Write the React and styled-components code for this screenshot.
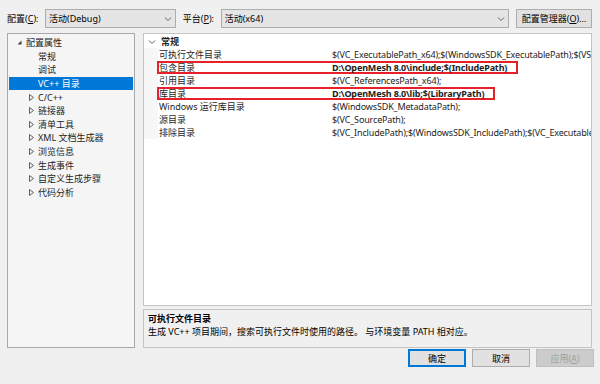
import React from 'react';
import styled, { createGlobalStyle } from 'styled-components';

const GlobalStyle = createGlobalStyle`
  html, body {
    margin: 0;
    padding: 0;
    background: #f0f0f0;
  }
  body {
    width: 600px;
    height: 384px;
    overflow: hidden;
    font-family: "Noto Sans", "Noto Sans CJK SC", sans-serif;
    font-size: 9px;
    color: #000;
  }
`;

const tree = [
  { label: '配置属性', level: 0, open: true },
  { label: '常规', level: 1 },
  { label: '调试', level: 1 },
  { label: 'VC++ 目录', level: 1, selected: true },
  { label: 'C/C++', level: 1, closed: true },
  { label: '链接器', level: 1, closed: true },
  { label: '清单工具', level: 1, closed: true },
  { label: 'XML 文档生成器', level: 1, closed: true },
  { label: '浏览信息', level: 1, closed: true },
  { label: '生成事件', level: 1, closed: true },
  { label: '自定义生成步骤', level: 1, closed: true },
  { label: '代码分析', level: 1, closed: true },
];

const props = [
  { name: '可执行文件目录', value: '$(VC_ExecutablePath_x64);$(WindowsSDK_ExecutablePath);$(VS_ExecutablePath);$(MSBuild_ExecutablePath)' },
  { name: '包含目录', value: 'D:\\OpenMesh 8.0\\include;$(IncludePath)', bold: true },
  { name: '引用目录', value: '$(VC_ReferencesPath_x64);' },
  { name: '库目录', value: 'D:\\OpenMesh 8.0\\lib;$(LibraryPath)', bold: true },
  { name: 'Windows 运行库目录', value: '$(WindowsSDK_MetadataPath);' },
  { name: '源目录', value: '$(VC_SourcePath);' },
  { name: '排除目录', value: '$(VC_IncludePath);$(WindowsSDK_IncludePath);$(VC_ExecutablePath_x64);' },
];

function Chevron() {
  return (
    <svg width="8" height="6" viewBox="0 0 8 6">
      <path d="M1 1.5 L4 4.5 L7 1.5" fill="none" stroke="#606060" strokeWidth="1" />
    </svg>
  );
}

function OpenArrow() {
  return (
    <svg width="5" height="5" viewBox="0 0 5 5">
      <path d="M4.5 0.5 L4.5 4.5 L0.5 4.5 Z" fill="#404040" />
    </svg>
  );
}

function ClosedArrow() {
  return (
    <svg width="5" height="7" viewBox="0 0 5 7">
      <path d="M0.5 0.5 L4.5 3.5 L0.5 6.5 Z" fill="none" stroke="#606060" strokeWidth="1" />
    </svg>
  );
}

function App() {
  return (
    <>
      <GlobalStyle />
      <Dialog>
        <TopBar>
          <Label>配置(<u>C</u>):</Label>
          <Select width={131}>
            <span>活动(Debug)</span>
            <Chevron />
          </Select>
          <Label left={7}>平台(<u>P</u>):</Label>
          <Select width={289}>
            <span>活动(x64)</span>
            <Chevron />
          </Select>
          <ManagerButton>配置管理器(<u>O</u>)...</ManagerButton>
        </TopBar>

        <Main>
          <TreePanel>
            {tree.map((item) => (
              <TreeItem key={item.label} level={item.level} selected={item.selected}>
                <Toggle>
                  {item.open && <OpenArrow />}
                  {item.closed && <ClosedArrow />}
                </Toggle>
                {item.label}
              </TreeItem>
            ))}
          </TreePanel>

          <RightSide>
            <Grid>
              <Category>
                <CatToggle>
                  <Chevron />
                </CatToggle>
                常规
              </Category>
              {props.map((p) => (
                <PropRow key={p.name}>
                  <Gutter />
                  <Mark marked={p.bold}>
                    <PropName>{p.name}</PropName>
                    <PropValue bold={p.bold}>{p.value}</PropValue>
                  </Mark>
                </PropRow>
              ))}
            </Grid>
            <Description>
              <DescTitle>可执行文件目录</DescTitle>
              <DescText>生成 VC++ 项目期间，搜索可执行文件时使用的路径。 与环境变量 PATH 相对应。</DescText>
            </Description>
          </RightSide>
        </Main>

        <Footer>
          <Button primary>确定</Button>
          <Button>取消</Button>
          <Button disabled>应用(<u>A</u>)</Button>
        </Footer>
      </Dialog>
    </>
  );
}

export default App;

const Dialog = styled.div`
  display: flex;
  flex-direction: column;
  width: 600px;
  height: 384px;
  box-sizing: border-box;
  padding: 9px 8px 0 7px;
`;

const TopBar = styled.div`
  display: flex;
  align-items: center;
  height: 19px;
`;

const Label = styled.span`
  width: 38px;
  margin-left: ${(p) => p.left || 0}px;
  white-space: nowrap;
  color: #000;
  u { text-decoration: underline; }
`;

const Select = styled.div`
  box-sizing: border-box;
  width: ${(p) => p.width}px;
  height: 19px;
  display: flex;
  align-items: center;
  justify-content: space-between;
  padding: 0 3px;
  background: #e5e5e5;
  border: 1px solid #adadad;
  svg { margin-top: 1px; }
`;

const Button = styled.button`
  box-sizing: border-box;
  width: 58px;
  height: 18px;
  padding: 0;
  font: inherit;
  color: ${(p) => (p.disabled ? '#a0a0a0' : '#000')};
  background: ${(p) => (p.disabled ? '#cccccc' : '#e1e1e1')};
  border: 1px solid ${(p) => (p.primary ? '#0078d7' : p.disabled ? '#bfbfbf' : '#adadad')};
  box-shadow: ${(p) => (p.primary ? 'inset 0 0 0 1px #0078d7' : 'none')};
  white-space: nowrap;
`;

const ManagerButton = styled(Button)`
  width: 76px;
  height: 19px;
  margin-left: 7px;
`;

const Main = styled.div`
  display: flex;
  gap: 8px;
  margin-top: 5px;
  height: 315px;
`;

const TreePanel = styled.div`
  box-sizing: border-box;
  width: 128px;
  height: 100%;
  padding-top: 2px;
  background: #f5f5f5;
  border: 1px solid #a8a8a8;
`;

const TreeItem = styled.div`
  display: flex;
  align-items: center;
  height: 13.6px;
  margin: 0 1px;
  padding-left: ${(p) => (p.level === 0 ? 6 : 18)}px;
  white-space: nowrap;
  background: ${(p) => (p.selected ? '#0078d7' : 'transparent')};
  color: ${(p) => (p.selected ? '#fff' : '#1e1e1e')};
`;

const Toggle = styled.span`
  display: inline-flex;
  align-items: center;
  width: 10px;
  flex: none;
  margin-right: 1px;
  padding-left: 2px;
  box-sizing: border-box;
`;

const RightSide = styled.div`
  flex: 1;
  display: flex;
  flex-direction: column;
  gap: 3px;
  min-width: 0;
`;

const Grid = styled.div`
  box-sizing: border-box;
  height: 273px;
  background: #fff;
  border: 1px solid #c4c4c4;
  overflow: hidden;
  padding-top: 1px;
`;

const Category = styled.div`
  display: flex;
  align-items: center;
  height: 13px;
  font-weight: bold;
  color: #1e1e1e;
`;

const CatToggle = styled.span`
  display: inline-flex;
  width: 17px;
  padding-left: 4px;
  box-sizing: border-box;
`;

const PropRow = styled.div`
  display: flex;
  height: 13px;
  white-space: nowrap;
`;

const Gutter = styled.div`
  width: 14px;
  flex: none;
  background: #f7f7f7;
`;

const Mark = styled.div`
  box-sizing: border-box;
  display: flex;
  align-items: center;
  height: 13px;
  margin-left: -1px;
  padding-right: ${(p) => (p.marked ? 9 : 0)}px;
  border: 2px solid ${(p) => (p.marked ? '#e8202a' : 'transparent')};
`;

const PropName = styled.span`
  width: 173px;
  flex: none;
  color: #1e1e1e;
`;

const PropValue = styled.span`
  font-weight: ${(p) => (p.bold ? 'bold' : 'normal')};
  color: #1e1e1e;
  letter-spacing: -0.15px;
`;

const Description = styled.div`
  box-sizing: border-box;
  flex: 1;
  padding: 2px 4px;
  background: #f0f0f0;
  border: 1px solid #c4c4c4;
  line-height: 13px;
`;

const DescTitle = styled.div`
  font-weight: bold;
`;

const DescText = styled.div``;

const Footer = styled.div`
  display: flex;
  justify-content: flex-end;
  gap: 6px;
  margin-top: 1px;
  margin-right: -2px;
`;
